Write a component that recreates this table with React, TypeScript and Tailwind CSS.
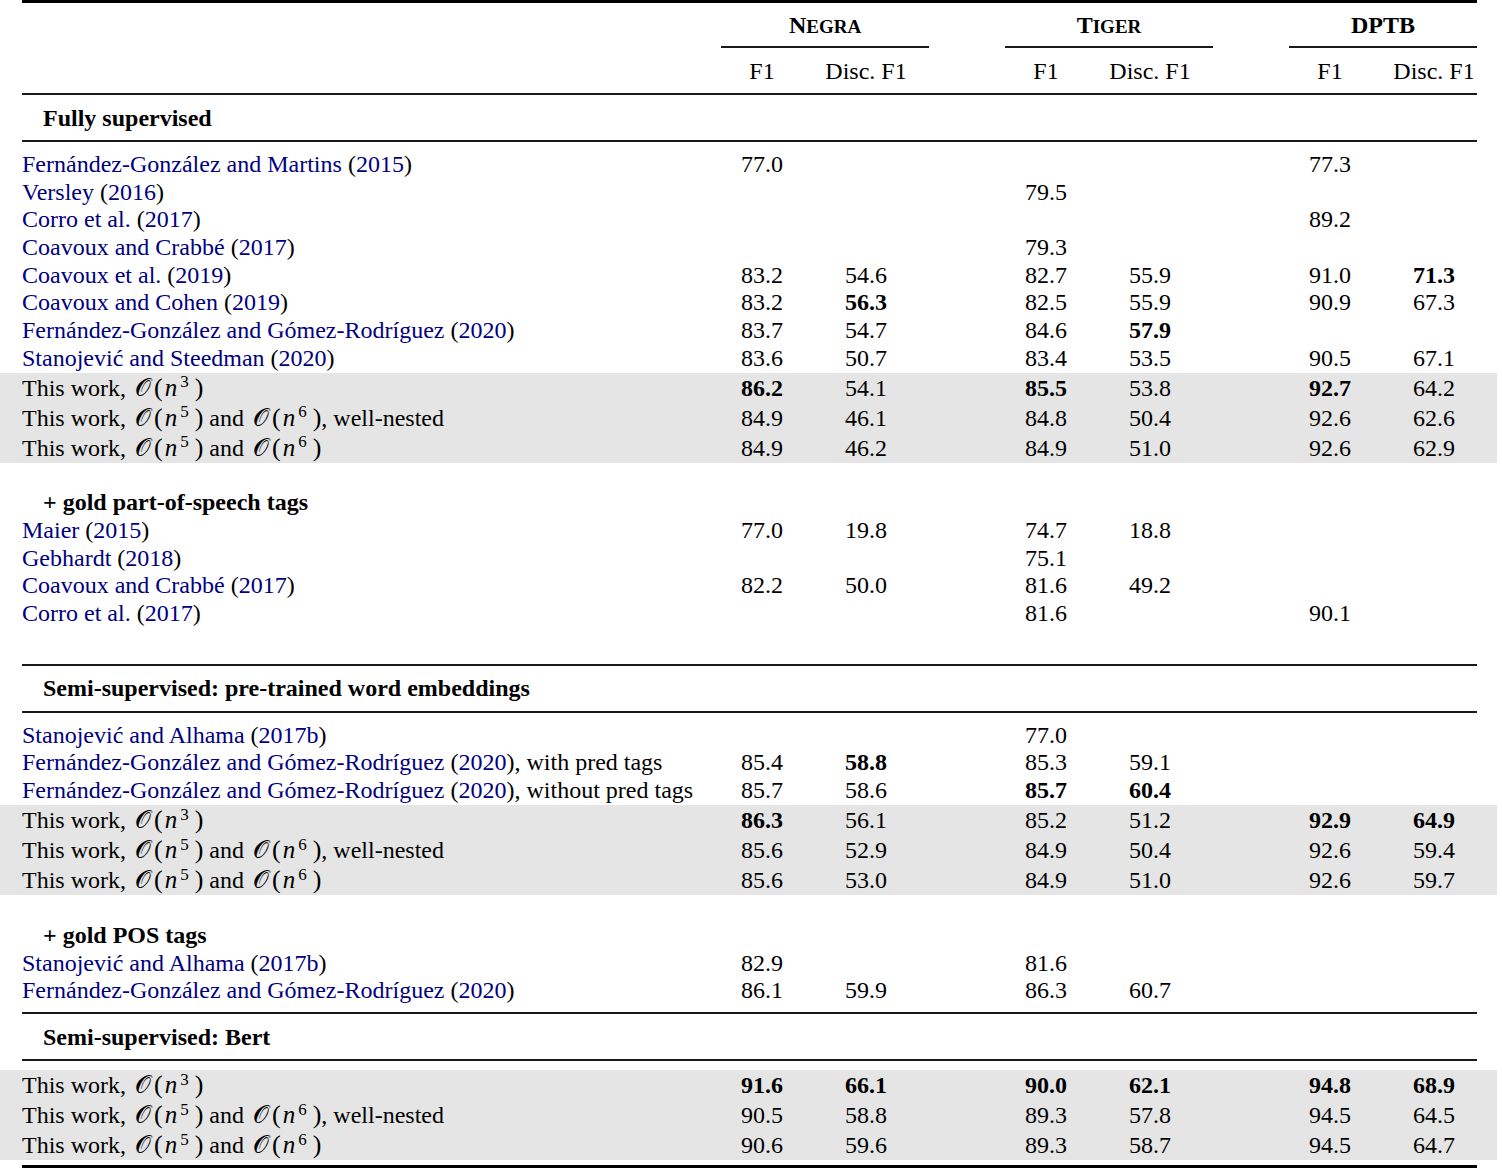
import type { ReactNode } from "react";

type Row = { label: ReactNode; v: string[] };

const Cite = ({ a, y }: { a: string; y: string }) => (
  <>
    <span className="text-[#000080]">{a}</span> (<span className="text-[#000080]">{y}</span>)
  </>
);

const Big = ({ k }: { k: number }) => (
  <span>
    <span className="ml-[3px] mr-[2px] font-['DejaVu_Serif',serif] text-[25px]">𝒪</span>
    <span className="ml-[1px] text-[26px]">(</span>
    <i className="pl-[2px] pr-[1px] text-[25px]">n</i>
    <sup className="ml-[2px] mr-[6px] text-[17px]">{k}</sup>
    <span className="text-[26px]">)</span>
  </span>
);

const work3 = (
  <>
    This work, <Big k={3} />
  </>
);
const workNested = (
  <>
    This work, <Big k={5} /> and <Big k={6} />, well-nested
  </>
);
const work56 = (
  <>
    This work, <Big k={5} /> and <Big k={6} />
  </>
);

// "*" in front of a value makes it bold
const fully: Row[] = [
  { label: <Cite a="Fernández-González and Martins" y="2015" />, v: ["77.0", "", "", "", "77.3", ""] },
  { label: <Cite a="Versley" y="2016" />, v: ["", "", "79.5", "", "", ""] },
  { label: <Cite a="Corro et al." y="2017" />, v: ["", "", "", "", "89.2", ""] },
  { label: <Cite a="Coavoux and Crabbé" y="2017" />, v: ["", "", "79.3", "", "", ""] },
  { label: <Cite a="Coavoux et al." y="2019" />, v: ["83.2", "54.6", "82.7", "55.9", "91.0", "*71.3"] },
  { label: <Cite a="Coavoux and Cohen" y="2019" />, v: ["83.2", "*56.3", "82.5", "55.9", "90.9", "67.3"] },
  { label: <Cite a="Fernández-González and Gómez-Rodríguez" y="2020" />, v: ["83.7", "54.7", "84.6", "*57.9", "", ""] },
  { label: <Cite a="Stanojević and Steedman" y="2020" />, v: ["83.6", "50.7", "83.4", "53.5", "90.5", "67.1"] },
];
const fullyOurs: Row[] = [
  { label: work3, v: ["*86.2", "54.1", "*85.5", "53.8", "*92.7", "64.2"] },
  { label: workNested, v: ["84.9", "46.1", "84.8", "50.4", "92.6", "62.6"] },
  { label: work56, v: ["84.9", "46.2", "84.9", "51.0", "92.6", "62.9"] },
];
const fullyGold: Row[] = [
  { label: <Cite a="Maier" y="2015" />, v: ["77.0", "19.8", "74.7", "18.8", "", ""] },
  { label: <Cite a="Gebhardt" y="2018" />, v: ["", "", "75.1", "", "", ""] },
  { label: <Cite a="Coavoux and Crabbé" y="2017" />, v: ["82.2", "50.0", "81.6", "49.2", "", ""] },
  { label: <Cite a="Corro et al." y="2017" />, v: ["", "", "81.6", "", "90.1", ""] },
];
const semi: Row[] = [
  { label: <Cite a="Stanojević and Alhama" y="2017b" />, v: ["", "", "77.0", "", "", ""] },
  {
    label: (
      <>
        <Cite a="Fernández-González and Gómez-Rodríguez" y="2020" />, with pred tags
      </>
    ),
    v: ["85.4", "*58.8", "85.3", "59.1", "", ""],
  },
  {
    label: (
      <>
        <Cite a="Fernández-González and Gómez-Rodríguez" y="2020" />, without pred tags
      </>
    ),
    v: ["85.7", "58.6", "*85.7", "*60.4", "", ""],
  },
];
const semiOurs: Row[] = [
  { label: work3, v: ["*86.3", "56.1", "85.2", "51.2", "*92.9", "*64.9"] },
  { label: workNested, v: ["85.6", "52.9", "84.9", "50.4", "92.6", "59.4"] },
  { label: work56, v: ["85.6", "53.0", "84.9", "51.0", "92.6", "59.7"] },
];
const semiGold: Row[] = [
  { label: <Cite a="Stanojević and Alhama" y="2017b" />, v: ["82.9", "", "81.6", "", "", ""] },
  { label: <Cite a="Fernández-González and Gómez-Rodríguez" y="2020" />, v: ["86.1", "59.9", "86.3", "60.7", "", ""] },
];
const bert: Row[] = [
  { label: work3, v: ["*91.6", "*66.1", "*90.0", "*62.1", "*94.8", "*68.9"] },
  { label: workNested, v: ["90.5", "58.8", "89.3", "57.8", "94.5", "64.5"] },
  { label: work56, v: ["90.6", "59.6", "89.3", "58.7", "94.5", "64.7"] },
];

function Num({ s, wide }: { s: string; wide?: boolean }) {
  const bold = s.startsWith("*");
  return (
    <div className={`${wide ? "w-[126px]" : "w-[82px]"} text-center ${bold ? "font-bold" : ""}`}>
      {bold ? s.slice(1) : s}
    </div>
  );
}

function DataRow({ row, tall }: { row: Row; tall?: boolean }) {
  const v = row.v;
  return (
    <div className={`flex items-center pl-[22px] ${tall ? "h-[30px]" : "h-[27.7px]"}`}>
      <div className="w-[699px] whitespace-nowrap">{row.label}</div>
      <Num s={v[0]} />
      <Num s={v[1]} wide />
      <div className="w-[76px]" />
      <Num s={v[2]} />
      <Num s={v[3]} wide />
      <div className="w-[76px]" />
      <Num s={v[4]} />
      <Num s={v[5]} wide />
    </div>
  );
}

const Rule = () => <div className="ml-[22px] h-[2px] w-[1455px] bg-[#1a1a1a]" />;

function Heading({ children }: { children: ReactNode }) {
  return (
    <div className="flex h-[45px] items-center pl-[43px] font-bold">{children}</div>
  );
}

function Shaded({ rows }: { rows: Row[] }) {
  return (
    <div className="w-[1497px] bg-[#e5e5e5]">
      {rows.map((r, i) => (
        <DataRow key={i} row={r} tall />
      ))}
    </div>
  );
}

export default function App() {
  return (
    <div className="min-h-[1172px] w-[1502px] bg-white font-['Liberation_Serif',serif] text-[24px] leading-none text-black">
      <div className="ml-[22px] h-[3px] w-[1455px] bg-black" />

      <div className="flex h-[43px] items-center pl-[721px] font-bold">
        <div className="w-[208px] text-center">
          N<span className="text-[19px]">EGRA</span>
        </div>
        <div className="w-[76px]" />
        <div className="w-[208px] text-center">
          T<span className="text-[19px]">IGER</span>
        </div>
        <div className="w-[76px]" />
        <div className="w-[188px] text-center">DPTB</div>
      </div>
      <div className="flex pl-[721px]">
        <div className="h-[2px] w-[208px] bg-[#1a1a1a]" />
        <div className="w-[76px]" />
        <div className="h-[2px] w-[208px] bg-[#1a1a1a]" />
        <div className="w-[76px]" />
        <div className="h-[2px] w-[188px] bg-[#1a1a1a]" />
      </div>
      <div className="flex h-[45px] items-center pl-[721px]">
        <div className="w-[82px] text-center">F1</div>
        <div className="w-[126px] text-center">Disc. F1</div>
        <div className="w-[76px]" />
        <div className="w-[82px] text-center">F1</div>
        <div className="w-[126px] text-center">Disc. F1</div>
        <div className="w-[76px]" />
        <div className="w-[82px] text-center">F1</div>
        <div className="w-[126px] text-center">Disc. F1</div>
      </div>
      <Rule />

      <Heading>Fully supervised</Heading>
      <Rule />
      <div className="pt-[8px]">
        {fully.map((r, i) => (
          <DataRow key={i} row={r} />
        ))}
      </div>
      <div className="pt-[1px]">
        <Shaded rows={fullyOurs} />
      </div>
      <div className="pt-[26px]">
        <div className="flex h-[27.7px] items-center pl-[43px] font-bold">+ gold part-of-speech tags</div>
        {fullyGold.map((r, i) => (
          <DataRow key={i} row={r} />
        ))}
      </div>
      <div className="h-[37px]" />
      <Rule />

      <Heading>Semi-supervised: pre-trained word embeddings</Heading>
      <Rule />
      <div className="pt-[8px]">
        {semi.map((r, i) => (
          <DataRow key={i} row={r} />
        ))}
      </div>
      <div className="pt-[1px]">
        <Shaded rows={semiOurs} />
      </div>
      <div className="pt-[26px]">
        <div className="flex h-[27.7px] items-center pl-[43px] font-bold">+ gold POS tags</div>
        {semiGold.map((r, i) => (
          <DataRow key={i} row={r} />
        ))}
      </div>
      <div className="h-[8px]" />
      <Rule />

      <Heading>Semi-supervised: Bert</Heading>
      <Rule />
      <div className="pt-[9px]">
        <Shaded rows={bert} />
      </div>
      <div className="pt-[5px]">
        <div className="ml-[22px] h-[3px] w-[1455px] bg-black" />
      </div>
    </div>
  );
}
